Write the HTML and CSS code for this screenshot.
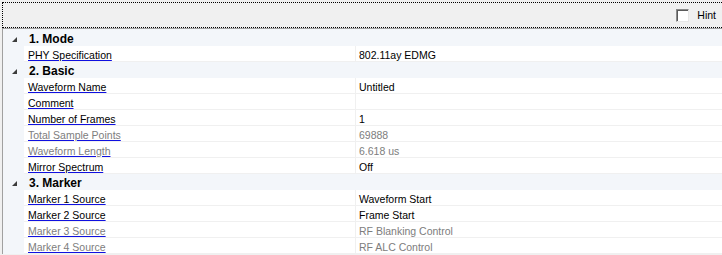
FILE: index.html
```html
<!DOCTYPE html>
<html lang="en">
<head>
    <meta charset="UTF-8">
    <title>Waveform Properties</title>
    <link rel="stylesheet" href="styles.css">
</head>
<body>
    <div class="toolbar">
        <div class="toolbar-inner">
            <label class="hint"><span class="checkbox"></span>Hint</label>
        </div>
    </div>

    <div class="grid">
        <div class="category"><span class="arrow"></span><span class="cat-name">1. Mode</span></div>
        <div class="prop"><span class="gutter"></span><span class="name">PHY Specification</span><span class="value">802.11ay EDMG</span></div>

        <div class="category"><span class="arrow"></span><span class="cat-name">2. Basic</span></div>
        <div class="prop"><span class="gutter"></span><span class="name">Waveform Name</span><span class="value">Untitled</span></div>
        <div class="prop"><span class="gutter"></span><span class="name">Comment</span><span class="value"></span></div>
        <div class="prop"><span class="gutter"></span><span class="name">Number of Frames</span><span class="value">1</span></div>
        <div class="prop readonly"><span class="gutter"></span><span class="name">Total Sample Points</span><span class="value">69888</span></div>
        <div class="prop readonly"><span class="gutter"></span><span class="name">Waveform Length</span><span class="value">6.618 us</span></div>
        <div class="prop"><span class="gutter"></span><span class="name">Mirror Spectrum</span><span class="value">Off</span></div>

        <div class="category"><span class="arrow"></span><span class="cat-name">3. Marker</span></div>
        <div class="prop"><span class="gutter"></span><span class="name">Marker 1 Source</span><span class="value">Waveform Start</span></div>
        <div class="prop"><span class="gutter"></span><span class="name">Marker 2 Source</span><span class="value">Frame Start</span></div>
        <div class="prop readonly"><span class="gutter"></span><span class="name">Marker 3 Source</span><span class="value">RF Blanking Control</span></div>
        <div class="prop readonly"><span class="gutter"></span><span class="name">Marker 4 Source</span><span class="value">RF ALC Control</span></div>
    </div>
</body>
</html>
```

FILE: styles.css
```css
/* property grid look */
body {
    margin: 0;
    background-color: #f0f0f0;
    font-family: "Liberation Sans", Arial, sans-serif;
    font-size: 10.5px;
    color: #000;
    overflow: hidden;
}
.toolbar {
    height: 28px;
    padding: 2px 0 0 2px;
    box-sizing: border-box;
}
.toolbar-inner {
    height: 26px;
    border: 1px dotted #000;
    border-right: none;
    box-sizing: border-box;
    display: flex;
    align-items: center;
    justify-content: flex-end;
    padding-right: 6px;
}
.hint {
    display: flex;
    align-items: center;
    gap: 8px;
}
.checkbox {
    width: 13px;
    height: 13px;
    box-sizing: border-box;
    background-color: #fff;
    border: 1px solid;
    border-color: #8a8a8a #e6e6e6 #e6e6e6 #8a8a8a;
    box-shadow: inset 1px 1px 0 #5a5a5a;
}
.grid {
    margin-left: 2px;
    padding-top: 1px;
    border-top: 1px solid #a0a0a0;
    border-left: 1px solid #a0a0a0;
    background-color: #f3f6fa;
}
.category {
    height: 16px;
    box-sizing: border-box;
    padding-top: 2px;
    display: flex;
    align-items: center;
    background-color: #f3f6fa;
}
.arrow {
    width: 0;
    height: 0;
    margin-left: 9px;
    border-left: 5px solid transparent;
    border-bottom: 5px solid #3c3c3c;
}
.cat-name {
    margin-left: 12px;
    font-weight: bold;
    font-size: 12px;
}
.prop {
    display: grid;
    grid-template-columns: 21px 331px 1fr;
    height: 16px;
}
.gutter {
    background-color: #f3f6fa;
}
.name, .value {
    height: 13px;
    padding-top: 2px;
    background-color: #fff;
    border-bottom: 1px solid #f0f0f0;
    line-height: 15px;
    white-space: nowrap;
}
.name {
    padding-left: 4px;
    text-decoration: underline;
    text-decoration-color: #1010e0;
    text-underline-offset: 1px;
}
.value {
    border-left: 1px solid #f0f0f0;
    padding-left: 3px;
}
.readonly .name, .readonly .value {
    color: #7d7d7d;
}
```
